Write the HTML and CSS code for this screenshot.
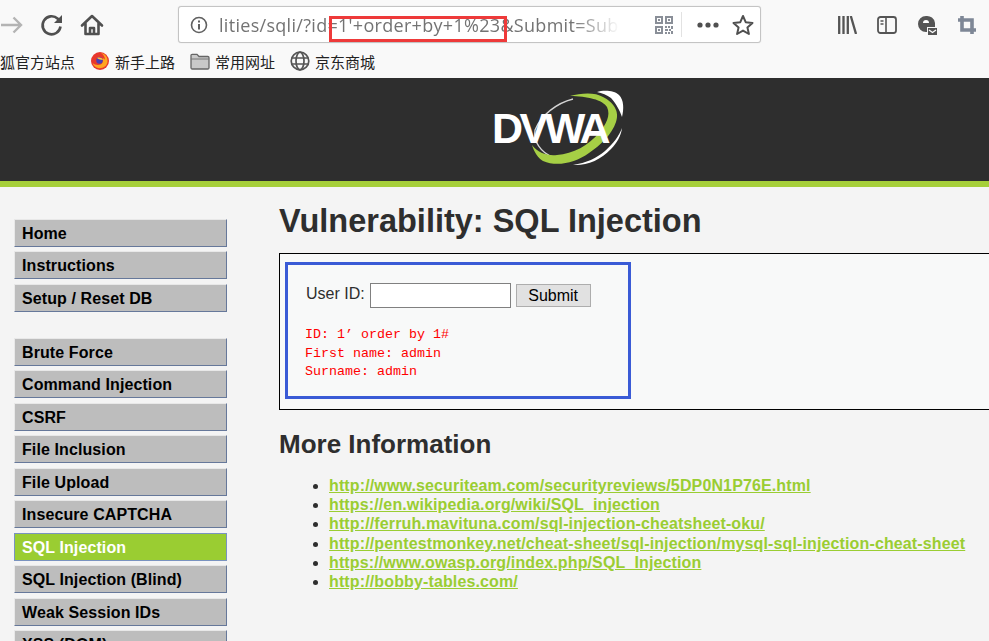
FILE: index.html
```html
<!DOCTYPE html>
<html lang="zh">
<head>
<meta charset="utf-8">
<title>Vulnerability: SQL Injection</title>
<link rel="stylesheet" href="styles.css">
</head>
<body>
<div class="browser">
  <div class="toolbar">
    <div class="nav">
      <svg class="ico" width="24" height="24" viewBox="0 0 24 24"><path d="M1 12H21M13.500 4.500L21 12L13.500 19.500" fill="none" stroke="#b4b4b4" stroke-width="2.400"/></svg>
      <svg class="ico" width="24" height="24" viewBox="0 0 24 24"><path d="M20.500 13.500A9 9 0 1 1 17.800 5.800L20.500 8.500" fill="none" stroke="#505050" stroke-width="2.600"/><path d="M22 2V10H14Z" fill="#505050"/></svg>
      <svg class="ico" width="24" height="24" viewBox="0 0 24 24"><path d="M2 12.500L12 3L22 12.500M5.500 10.500V21H18.500V10.500M10 21V15H14V21" fill="none" stroke="#505050" stroke-width="2.600" stroke-linejoin="round" stroke-linecap="round"/></svg>
    </div>
    <div class="urlbar">
      <svg class="info" width="18" height="18" viewBox="0 0 18 18"><circle cx="9" cy="9" r="7.500" fill="none" stroke="#606060" stroke-width="1.600"/><rect x="8" y="8" width="2" height="5.500" fill="#606060"/><rect x="8" y="4.500" width="2" height="2" fill="#606060"/></svg>
      <div class="url">lities/sqli/?id=1'+order+by+1%23&amp;Submit=Sub</div>
      <svg class="qr" width="18" height="18" viewBox="0 0 18 18"><path d="M0 0H8V8H0ZM2 2V6H6V2ZM10 0H18V8H10ZM12 2V6H16V2ZM0 10H8V18H0ZM2 12V16H6V12Z" fill="#8a8f98" fill-rule="evenodd"/><path d="M3 3H5V5H3ZM13 3H15V5H13ZM3 13H5V15H3ZM10 10H12V12H10ZM13 10H15V12H13ZM16 10H18V13H16ZM10 13H13V15H10ZM14 13H16V15H14ZM10 16H12V18H10ZM13 16H15V18H13ZM16 15H18V18H16Z" fill="#8a8f98"/></svg>
      <span class="divider"></span>
      <svg class="dots" width="22" height="6" viewBox="0 0 22 6"><circle cx="3" cy="3" r="2.600" fill="#505050"/><circle cx="11" cy="3" r="2.600" fill="#505050"/><circle cx="19" cy="3" r="2.600" fill="#505050"/></svg>
      <svg class="star" width="22" height="22" viewBox="0 0 22 22"><path d="M11 2L13.700 8.200L20.500 8.900L15.400 13.400L16.900 20L11 16.600L5.100 20L6.600 13.400L1.500 8.900L8.300 8.200Z" fill="none" stroke="#505050" stroke-width="2" stroke-linejoin="round"/></svg>
    </div>
    <div class="tools">
      <svg width="19" height="18" viewBox="0 0 19 18"><path d="M1.200 0V18M5.500 0V18M9.800 0V18M12.800 0L18 18" fill="none" stroke="#555" stroke-width="2.300"/></svg>
      <svg width="20" height="18" viewBox="0 0 20 18"><rect x="1" y="1" width="18" height="16" rx="2.500" fill="none" stroke="#555" stroke-width="1.800"/><path d="M9 1V17M3.500 5H6.500M3.500 8H6.500" fill="none" stroke="#555" stroke-width="1.600"/></svg>
      <svg width="20" height="20" viewBox="0 0 20 20"><path d="M9 1A8 8 0 1 0 9 17H10V12H18V8A8 8 0 0 0 9 1Z" fill="#555"/><path d="M6 8A2.500 2.500 0 0 1 12 8H6Z" fill="#fff"/><path d="M11 13H20V20H11Z" fill="#555"/><path d="M12 15L15.500 17.500L19 15" fill="none" stroke="#fff" stroke-width="1.300"/></svg>
      <svg width="20" height="20" viewBox="0 0 20 20"><path d="M5 1V15H19M1 5H15V19" fill="none" stroke="#7e8796" stroke-width="3.600"/></svg>
    </div>
  </div>
  <div class="bookmarks">
    <span class="bm">狐官方站点</span>
    <span class="bm bm-fx">
      <svg width="18" height="18" viewBox="0 0 18 18"><circle cx="9" cy="9" r="9" fill="#e8382c"/><path d="M10 1C15 2 17 6 16.500 10C16 14.500 11 17 7 16C4 15.300 2 13 1.500 11C4 13.500 10 14 11.500 10.500C12 9 12.500 7.500 11.500 6C13 6.500 13.500 7 14 8C14 5 12.500 2.500 10 1Z" fill="#ffa41f"/><circle cx="8.500" cy="8.500" r="3.200" fill="#4a3fb5"/><path d="M6 6C8 5 11 5.500 12 8C10 7.500 8 7.500 6 6Z" fill="#ffc53a"/></svg>
      新手上路
    </span>
    <span class="bm bm-tight">
      <svg width="20" height="17" viewBox="0 0 20 17"><path d="M1 15V2.500A1.200 1.200 0 0 1 2.200 1.300H7L9 3.500H17.800A1.200 1.200 0 0 1 19 4.700V15A1.200 1.200 0 0 1 17.800 16H2.200A1.200 1.200 0 0 1 1 15Z" fill="#c9c9c9" stroke="#666" stroke-width="1.300"/><path d="M1 6H19" stroke="#777" stroke-width="1"/></svg>
      常用网址
    </span>
    <span class="bm bm-tight">
      <svg width="20" height="20" viewBox="0 0 20 20"><g fill="none" stroke="#555" stroke-width="1.700"><circle cx="10" cy="10" r="8.800"/><ellipse cx="10" cy="10" rx="4" ry="8.800"/><path d="M1.500 7H18.500M1.500 13H18.500"/></g></svg>
      京东商城
    </span>
  </div>
</div>

<header class="site-header">
  <svg class="logo" width="136" height="80" viewBox="0 0 136 80">
    <path d="M82 10C66 14 50 26 44 41C42 52 50 64 62 68C67 69 72 69 76 68" fill="none" stroke="#d4d4d4" stroke-width="1.300"/>
    <path d="M79 7C90 4 104 3 112 8C122 13 129 22 125 33C121 45 110 56 98 64C84 74 66 78 52 72C47 69 43 63 41 56C47 64 56 67 66 66C82 65 98 56 108 44C115 35 120 27 116 18C112 11 96 7 79 7Z" fill="#a6cf45"/>
    <path d="M106 3C112 1 123 1 128 6C133 11 133 20 131 28C129 22 126 16 120 9C116 6 111 4 106 3Z" fill="#fff"/>
    <path d="M82 76C95 74 106 69 114 62C122 55 128 47 131 39C130 47 126 54 120 60C110 71 95 77 82 76Z" fill="#fff"/>
    <text class="logo-text" x="1" y="54">DVWA</text>
  </svg>
</header>
<div class="green-strip"></div>

<div class="page">
  <nav class="side">
    <div class="group">
      <a class="item">Home</a>
      <a class="item">Instructions</a>
      <a class="item">Setup / Reset DB</a>
    </div>
    <div class="group">
      <a class="item">Brute Force</a>
      <a class="item">Command Injection</a>
      <a class="item">CSRF</a>
      <a class="item">File Inclusion</a>
      <a class="item">File Upload</a>
      <a class="item">Insecure CAPTCHA</a>
      <a class="item active">SQL Injection</a>
      <a class="item">SQL Injection (Blind)</a>
      <a class="item">Weak Session IDs</a>
      <a class="item">XSS (DOM)</a>
    </div>
  </nav>
  <main class="main">
    <h1>Vulnerability: SQL Injection</h1>
    <div class="vuln">
      <form class="form">
        <label class="lbl">User ID:</label>
        <input class="field" type="text">
        <button class="btn" type="button">Submit</button>
      </form>
      <pre class="result">ID: 1’ order by 1#
First name: admin
Surname: admin</pre>
    </div>
    <h2>More Information</h2>
    <ul class="links">
      <li><a href="#">http://www.securiteam.com/securityreviews/5DP0N1P76E.html</a></li>
      <li><a href="#">https://en.wikipedia.org/wiki/SQL_injection</a></li>
      <li><a href="#">http://ferruh.mavituna.com/sql-injection-cheatsheet-oku/</a></li>
      <li><a href="#">http://pentestmonkey.net/cheat-sheet/sql-injection/mysql-sql-injection-cheat-sheet</a></li>
      <li><a href="#">https://www.owasp.org/index.php/SQL_Injection</a></li>
      <li><a href="#">http://bobby-tables.com/</a></li>
    </ul>
  </main>
</div>

<div class="mark-red"></div>
<div class="mark-blue"></div>
</body>
</html>
```
FILE: styles.css
```css
html, body {
  margin: 0;
  padding: 0;
  height: 641px;
  overflow: hidden;
}
body {
  position: relative;
  width: 989px;
  background: #f4f4f4;
  font-family: "Liberation Sans", Arial, sans-serif;
  color: #2e2e2e;
}
.browser {
  height: 78px;
  background: #f9f9f9;
  overflow: hidden;
}
.toolbar {
  display: flex;
  align-items: flex-start;
  height: 46px;
  padding-top: 6px;
  box-sizing: border-box;
}
.nav {
  display: flex;
  align-items: center;
  gap: 16px;
  height: 37px;
  width: 178px;
}
.urlbar {
  display: flex;
  align-items: center;
  box-sizing: border-box;
  width: 583px;
  height: 37px;
  background: #fff;
  border: 1px solid #c4c4c4;
  border-radius: 3px;
  box-shadow: 0 0 1px #ccc;
}
.info {
  margin-left: 11px;
  flex: none;
}
.url {
  margin-left: 11px;
  width: 401px;
  flex: none;
  overflow: hidden;
  white-space: nowrap;
  font-family: "Open Sans", sans-serif;
  font-size: 18px;
  letter-spacing: 0.3px;
  color: #737373;
  -webkit-mask-image: linear-gradient(to right, #000 88%, transparent 100%);
  mask-image: linear-gradient(to right, #000 88%, transparent 100%);
}
.qr {
  margin-left: 35px;
  flex: none;
}
.divider {
  width: 1px;
  height: 25px;
  background: #e2e2e2;
  margin-left: 8px;
  flex: none;
}
.dots {
  margin-left: 15px;
  flex: none;
}
.star {
  margin-left: 13px;
  flex: none;
}
.tools {
  display: flex;
  align-items: center;
  gap: 20px;
  height: 37px;
  margin-left: 77px;
}
.bookmarks {
  display: flex;
  align-items: center;
  gap: 15px;
  height: 30px;
  font-family: "Noto Sans CJK SC", sans-serif;
  font-size: 15px;
  color: #222;
}
.bm {
  display: flex;
  align-items: center;
  gap: 6px;
  white-space: nowrap;
}
.bm-fx {
  margin-left: 1px;
}
.bm-tight {
  gap: 5px;
}
.site-header {
  height: 103px;
  background: #2e2e2e;
  display: flex;
  padding-left: 491px;
}
.logo {
  margin-top: 11px;
}
.logo-text {
  font-family: "Liberation Sans", sans-serif;
  font-weight: 700;
  font-size: 43px;
  letter-spacing: -3.500px;
  fill: #fff;
}
.green-strip {
  height: 6px;
  background: #a6cf3a;
}
.page {
  display: flex;
  align-items: flex-start;
}
.side {
  width: 213px;
  margin: 31.800px 0 0 14px;
  flex: none;
}
.group {
  display: flex;
  flex-direction: column;
  gap: 4.500px;
  margin-bottom: 26px;
}
.item {
  display: block;
  box-sizing: border-box;
  height: 28px;
  line-height: 27px;
  padding-left: 7px;
  background: #bdbdbd;
  border-top: 1px solid #e8e8e8;
  border-left: 1px solid #e8e8e8;
  border-right: 1px solid #66789a;
  border-bottom: 1px solid #66789a;
  font-size: 16px;
  letter-spacing: 0.1px;
  font-weight: 700;
  color: #000;
}
.item.active {
  background: #9acd32;
  color: #fff;
  border: 1px solid #7a93c0;
}
.main {
  flex: 1;
  margin-left: 52px;
  min-width: 0;
}
h1 {
  margin: 16px 0 0;
  font-size: 32.500px;
  line-height: 37px;
  font-weight: 700;
  color: #2e2e2e;
}
.vuln {
  box-sizing: border-box;
  height: 157px;
  margin-top: 13px;
  margin-right: -10px;
  border: 1px solid #000;
  background: #f8f9f9;
  padding: 28px 0 0 26px;
}
.form {
  display: flex;
  align-items: center;
  height: 26px;
  font-size: 16px;
  color: #2e2e2e;
}
.lbl {
  margin-bottom: 2px;
}
.field {
  box-sizing: border-box;
  width: 141px;
  height: 25px;
  margin: 0 0 0 5px;
  padding: 0;
  background: #fff;
  border: 1px solid #808080;
}
.btn {
  box-sizing: border-box;
  width: 75px;
  height: 23px;
  margin: 1px 0 0 5px;
  padding: 0;
  background: #e1e1e1;
  border: 1px solid #adadad;
  font-family: "Liberation Sans", sans-serif;
  font-size: 16px;
  color: #000;
}
.result {
  margin: 18.400px 0 0 -1px;
  font-family: "Liberation Mono", monospace;
  font-size: 13.330px;
  line-height: 18.300px;
  color: #f00;
}
h2 {
  margin: 19px 0 0;
  font-size: 26px;
  line-height: 30px;
  font-weight: 700;
  color: #2e2e2e;
}
.links {
  margin: 17px 0 0;
  padding: 0 0 0 50px;
  font-size: 16px;
  letter-spacing: 0.13px;
  line-height: 19.200px;
}
.links a {
  color: #9acd32;
  font-weight: 700;
}
.mark-red {
  position: absolute;
  left: 329px;
  top: 16px;
  width: 178px;
  height: 26px;
  box-sizing: border-box;
  border: 3px solid #ee3a3a;
}
.mark-blue {
  position: absolute;
  left: 285px;
  top: 262px;
  width: 346px;
  height: 137px;
  box-sizing: border-box;
  border: 3px solid #3a5bd6;
}
```
